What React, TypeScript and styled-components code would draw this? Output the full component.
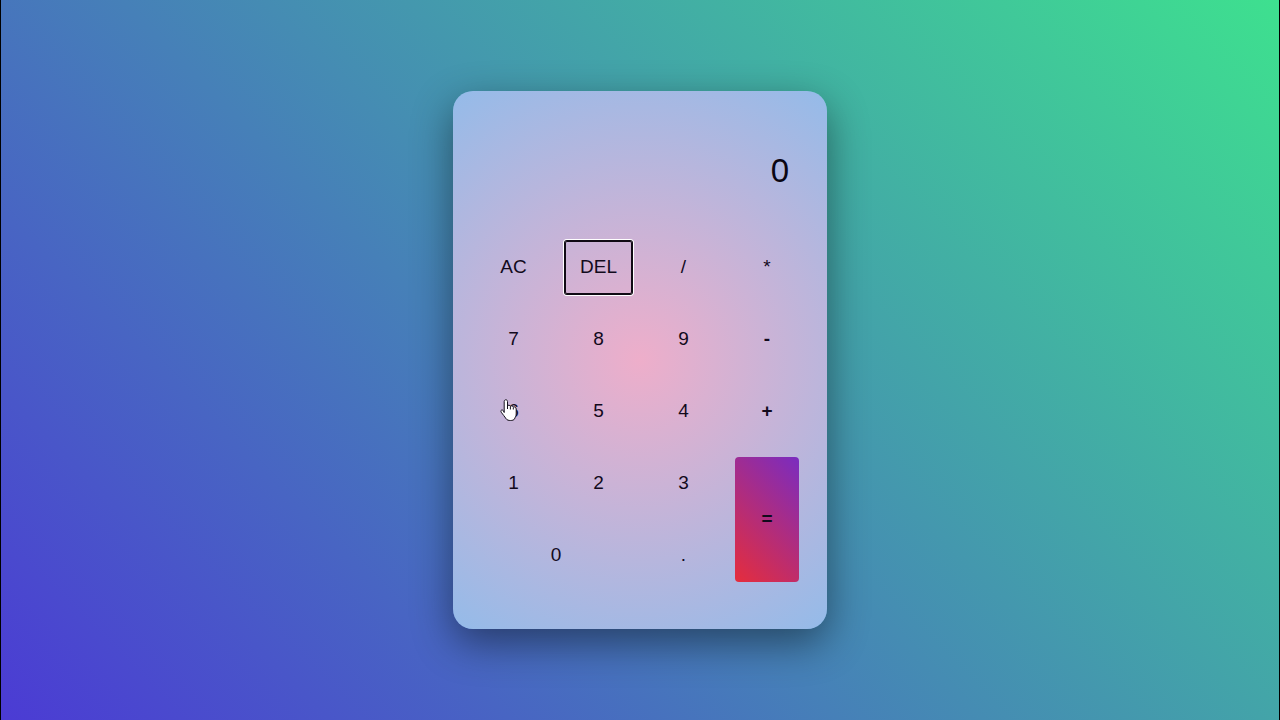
import React from "react";
import styled, { createGlobalStyle, css } from "styled-components";

const GlobalStyle = createGlobalStyle`
  *, *::before, *::after { box-sizing: border-box; }
  body { margin: 0; font-family: "Liberation Sans", Arial, sans-serif; }
`;

const Page = styled.main`
  position: relative;
  min-height: 100vh;
  display: flex;
  align-items: center;
  justify-content: center;
  border-left: 1px solid #000;
  border-right: 1px solid #000;
  background: linear-gradient(45deg, #4b3bd4 0%, #4680b8 42%, #3ee08f 100%) padding-box;
`;

const Calculator = styled.form`
  display: flex;
  flex-direction: column;
  padding: 47px 28px 47px 27px;
  border-radius: 20px;
  background: radial-gradient(circle, #eeaeca 0%, #94bbe9 100%);
  box-shadow: 0 14px 40px rgba(0, 0, 0, 0.45);
`;

const Display = styled.input`
  width: 0;
  min-width: 100%;
  height: 66px;
  margin-bottom: 37px;
  padding: 0 10px;
  border: 0;
  background: transparent;
  color: #0a0612;
  font: 33px "Liberation Sans", Arial, sans-serif;
  text-align: right;
  outline: none;
`;

const Keypad = styled.div`
  display: grid;
  grid-template-columns: repeat(3, 67px) 64px;
  grid-auto-rows: 53px;
  gap: 19px 18px;
`;

const Key = styled.button<{ $wide?: boolean; $equals?: boolean; $strong?: boolean; $focused?: boolean }>`
  padding: 0 0 1px;
  border: 0;
  border-radius: 4px;
  background: transparent;
  color: #120a1c;
  font: ${(p) => (p.$strong ? "bold" : "normal")} 19px "Liberation Sans", Arial, sans-serif;
  cursor: pointer;
  ${(p) => p.$wide && css`grid-column: span 2;`}
  ${(p) => p.$equals && css`
    grid-column: 4;
    grid-row: 4 / span 2;
    background: linear-gradient(45deg, #e52d3c 0%, #7a2cc0 100%);
  `}
  ${(p) => p.$focused && css`
    border-radius: 2px;
    box-shadow: inset 0 0 0 1px #100a14, 0 0 0 1px #100a14, 0 0 0 2px #fff;
  `}
`;

const Pointer = styled.svg`
  position: absolute;
  left: 498px;
  top: 398px;
  pointer-events: none;
`;

const keys = ["AC", "DEL", "/", "*", "7", "8", "9", "-", "6", "5", "4", "+", "1", "2", "3", "=", "0", "."];

export default function App() {
  return (
    <>
      <GlobalStyle />
      <Page>
        <Calculator onSubmit={(e) => e.preventDefault()}>
          <Display type="text" aria-label="Result" value="0" readOnly />
          <Keypad>
            {keys.map((k) => (
              <Key
                key={k}
                type="button"
                $wide={k === "0"}
                $equals={k === "="}
                $strong={"-+=".includes(k)}
                $focused={k === "DEL"}
              >
                {k}
              </Key>
            ))}
          </Keypad>
        </Calculator>
        <Pointer width="20" height="25" viewBox="0 0 20 25" aria-hidden="true">
          <path
            d="M5.2 14.5V3.5C5.2 1.2 8.5 1.2 8.5 3.5V8C8.9 6.8 11 6.9 11.4 8.4C12 7.4 14 7.7 14.3 9.2C15.2 8.4 17.2 9 17.2 11V16C17.2 18 16 19.5 15.5 21C14.5 23 8.5 23 7.3 21C6 18.8 3.7 16.5 2.2 14.2C1.2 12.3 3.2 11 4.4 12.8Z"
            fill="#fff"
            stroke="#15101c"
            strokeWidth="1"
            strokeLinejoin="round"
          />
          <path d="M8.5 8V11M11.4 8.5V11.5M14.3 9.5V11.5" stroke="#15101c" strokeWidth="1" fill="none" />
        </Pointer>
      </Page>
    </>
  );
}
